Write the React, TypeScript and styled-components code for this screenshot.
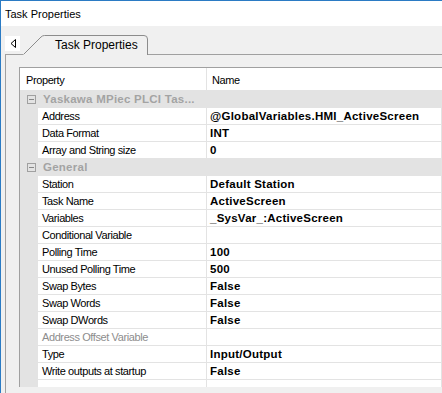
import React from "react";
import styled, { createGlobalStyle } from "styled-components";

const LINE = "#e3e3e3";
const EDGE = "#a0a0a0";
const FACE = "#f0f0f0";

const GlobalStyle = createGlobalStyle`
  html, body {
    margin: 0;
    padding: 0;
    background: ${FACE};
    overflow: hidden;
  }
  #root {
    width: 442px;
    height: 393px;
  }
`;

const Window = styled.div`
  width: 442px;
  height: 393px;
  box-sizing: border-box;
  border-top: 1px solid #2b7bc4;
  border-left: 1px solid #2b7bc4;
  background: ${FACE};
  display: flex;
  flex-direction: column;
  overflow: hidden;
  font-family: "Liberation Sans", Arial, sans-serif;
  color: #000;
`;

const TitleBar = styled.div`
  height: 25px;
  flex: none;
  background: #fff;
  display: flex;
  align-items: center;
  padding-left: 4px;
  font-size: 11px;
`;

const TabStrip = styled.div`
  height: 28px;
  flex: none;
  display: flex;
  align-items: flex-end;
  padding-left: 4px;
  gap: 2px;
`;

const ScrollButton = styled.div`
  width: 15px;
  height: 15px;
  margin-bottom: 3px;
  background: #fff;
  display: flex;
  align-items: center;
  justify-content: center;
`;

const Tab = styled.div`
  position: relative;
  z-index: 1;
  width: 125px;
  height: 20px;
  margin-bottom: -1px;
  margin-left: 1px;
  box-sizing: border-box;
  padding-left: 32px;
  background: ${FACE};
  display: flex;
  align-items: center;
  font-size: 12px;
`;

const TabOutline = styled.svg`
  position: absolute;
  left: 0;
  top: 0;
`;

const TabLabel = styled.span`
  position: relative;
`;

const TabPage = styled.div`
  flex: 1;
  margin-left: 4px;
  border-top: 1px solid ${EDGE};
  border-left: 1px solid ${EDGE};
  padding: 12px 0 0 13px;
  display: flex;
  flex-direction: column;
`;

const Grid = styled.div`
  width: 423px;
  box-sizing: border-box;
  border-top: 1px solid ${EDGE};
  border-left: 1px solid ${EDGE};
  font-size: 11px;
  letter-spacing: -0.4px;
`;

const Header = styled.div`
  display: grid;
  grid-template-columns: 186px 1px 1fr;
  height: 23px;
  box-sizing: border-box;
  background: #fff;
  border-bottom: 1px solid ${LINE};
`;

const HeaderCell = styled.div<{ $pad: number }>`
  display: flex;
  align-items: center;
  padding-left: ${(p) => p.$pad}px;
  padding-top: 2px;
`;

const Divider = styled.div`
  background: ${LINE};
`;

const GridBody = styled.div`
  border-right: 1px solid ${LINE};
`;

const CategoryRow = styled.div`
  height: 17px;
  box-sizing: border-box;
  border-bottom: 1px solid ${LINE};
  background: ${LINE};
  display: flex;
  align-items: center;
  padding-left: 7px;
`;

const ExpandBox = styled.div`
  position: relative;
  width: 9px;
  height: 9px;
  box-sizing: border-box;
  border: 1px solid ${EDGE};
  margin-right: 7px;

  &::after {
    content: "";
    position: absolute;
    left: 1px;
    top: 3px;
    width: 5px;
    height: 1px;
    background: #888;
  }
`;

const CategoryLabel = styled.span`
  font-weight: bold;
  font-size: 11.5px;
  letter-spacing: 0.25px;
  color: #a3a3a3;
  white-space: nowrap;
`;

const Row = styled.div`
  display: grid;
  grid-template-columns: 18px 168px 1px 1fr;
  height: 17px;
  box-sizing: border-box;
  border-bottom: 1px solid ${LINE};
  background: #fff;
`;

const Gutter = styled.div`
  background: ${LINE};
`;

const NameCell = styled.div<{ $disabled?: boolean }>`
  padding-left: 4px;
  line-height: 16px;
  white-space: nowrap;
  overflow: hidden;
  color: ${(p) => (p.$disabled ? "#8d8d8d" : "#000")};
`;

const ValueCell = styled.div`
  padding-left: 3px;
  line-height: 16px;
  font-weight: bold;
  font-size: 11.5px;
  letter-spacing: 0.25px;
  white-space: nowrap;
  overflow: hidden;
`;

const Filler = styled(Row)`
  height: 7px;
  border-bottom: none;
`;

type Prop = { name: string; value: string; disabled?: boolean };
type Category = { title: string; props: Prop[] };

const categories: Category[] = [
  {
    title: "Yaskawa MPiec PLCI Tas...",
    props: [
      { name: "Address", value: "@GlobalVariables.HMI_ActiveScreen" },
      { name: "Data Format", value: "INT" },
      { name: "Array and String size", value: "0" },
    ],
  },
  {
    title: "General",
    props: [
      { name: "Station", value: "Default Station" },
      { name: "Task Name", value: "ActiveScreen" },
      { name: "Variables", value: "_SysVar_:ActiveScreen" },
      { name: "Conditional Variable", value: "" },
      { name: "Polling Time", value: "100" },
      { name: "Unused Polling Time", value: "500" },
      { name: "Swap Bytes", value: "False" },
      { name: "Swap Words", value: "False" },
      { name: "Swap DWords", value: "False" },
      { name: "Address Offset Variable", value: "", disabled: true },
      { name: "Type", value: "Input/Output" },
      { name: "Write outputs at startup", value: "False" },
    ],
  },
];

function App() {
  return (
    <>
      <GlobalStyle />
      <Window>
        <TitleBar>Task Properties</TitleBar>
        <TabStrip>
          <ScrollButton>
            <svg width="6" height="9" viewBox="0 0 6 9">
              <polygon points="5.5,0.5 5.5,8.5 1,4.5" fill="none" stroke="#000" strokeWidth="1" />
            </svg>
          </ScrollButton>
          <Tab>
            <TabOutline width="125" height="20" viewBox="0 0 125 20">
              <path
                d="M0.5 19.5 L18 2 Q19.5 0.5 21.5 0.5 L121 0.5 Q124.5 0.5 124.5 4 L124.5 20"
                fill="none"
                stroke="#8c8c8c"
                strokeWidth="1"
              />
            </TabOutline>
            <TabLabel>Task Properties</TabLabel>
          </Tab>
        </TabStrip>
        <TabPage>
          <Grid>
            <Header>
              <HeaderCell $pad={6}>Property</HeaderCell>
              <Divider />
              <HeaderCell $pad={5}>Name</HeaderCell>
            </Header>
            <GridBody>
              {categories.map((cat) => (
                <React.Fragment key={cat.title}>
                  <CategoryRow>
                    <ExpandBox />
                    <CategoryLabel>{cat.title}</CategoryLabel>
                  </CategoryRow>
                  {cat.props.map((p) => (
                    <Row key={p.name}>
                      <Gutter />
                      <NameCell $disabled={p.disabled}>{p.name}</NameCell>
                      <Divider />
                      <ValueCell>{p.value}</ValueCell>
                    </Row>
                  ))}
                </React.Fragment>
              ))}
              <Filler>
                <Gutter />
                <div />
                <Divider />
                <div />
              </Filler>
            </GridBody>
          </Grid>
        </TabPage>
      </Window>
    </>
  );
}

export default App;
